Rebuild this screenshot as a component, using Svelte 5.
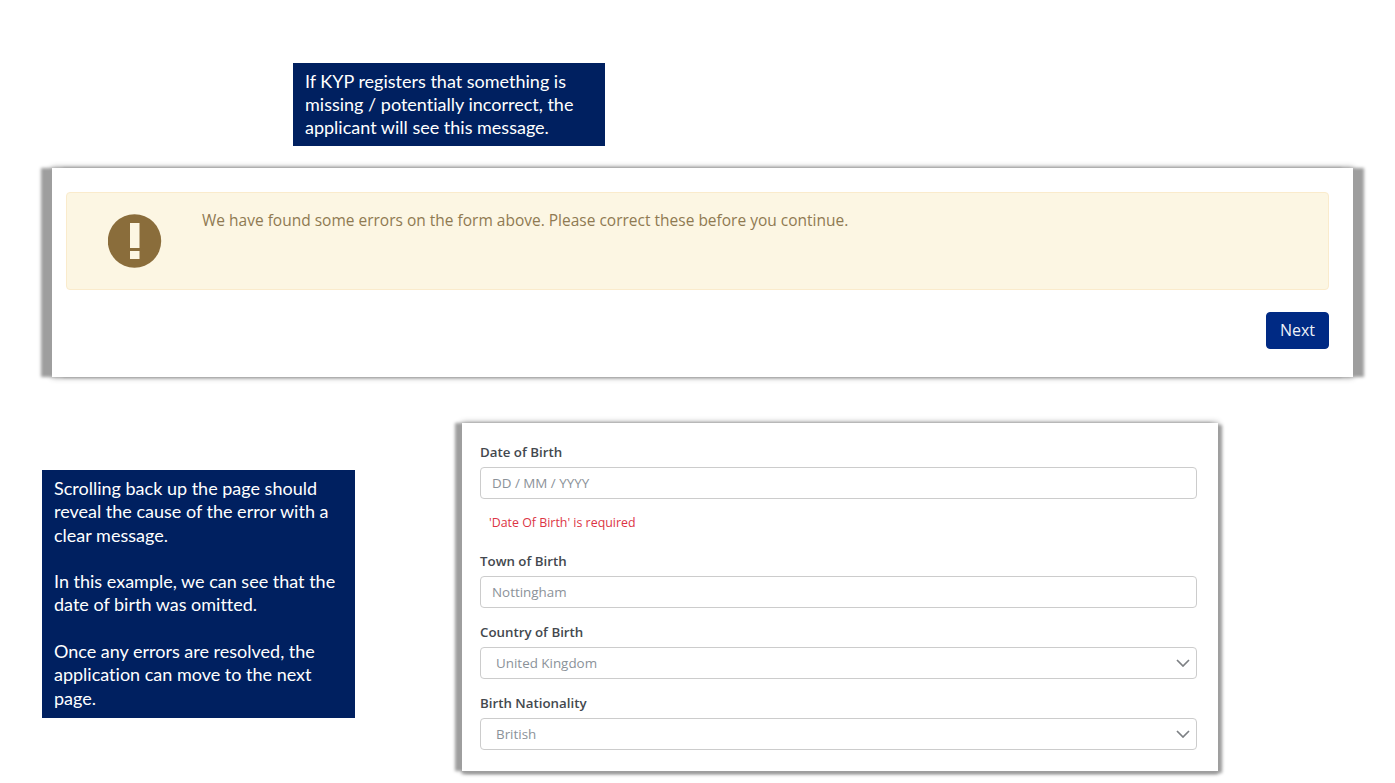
<script>
  const fields = [
    { label: 'Date of Birth', value: 'DD / MM / YYYY', error: "'Date Of Birth' is required" },
    { label: 'Town of Birth', value: 'Nottingham' },
    { label: 'Country of Birth', value: 'United Kingdom', select: true },
    { label: 'Birth Nationality', value: 'British', select: true }
  ]
</script>

<div class="page">
  <div class="note top-note">
    If KYP registers that something is missing / potentially incorrect, the applicant will see this message.
  </div>

  <section class="wide-card">
    <div class="alert">
      <svg class="alert-icon" viewBox="0 0 54 54" width="54" height="54" aria-hidden="true">
        <circle cx="26.5" cy="27" r="26.7" fill="#8a6d3b" />
        <rect x="22" y="9" width="9.5" height="25" fill="#fcf6e3" />
        <rect x="22" y="37" width="9.5" height="8" fill="#fcf6e3" />
      </svg>
      <p>We have found some errors on the form above. Please correct these before you continue.</p>
    </div>
    <div class="actions">
      <button>Next</button>
    </div>
  </section>

  <div class="lower">
    <div class="note side-note">
      <p>Scrolling back up the page should reveal the cause of the error with a clear message.</p>
      <p>In this example, we can see that the date of birth was omitted.</p>
      <p>Once any errors are resolved, the application can move to the next page.</p>
    </div>

    <section class="form-card">
      {#each fields as field}
        <div class="field">
          <div class="label">{field.label}</div>
          <div class="control" class:select={field.select}>
            <span>{field.value}</span>
            {#if field.select}
              <svg viewBox="0 0 14 8" width="14" height="8" aria-hidden="true">
                <path d="M1 1l6 6 6-6" fill="none" stroke="#7d8084" stroke-width="1.7" />
              </svg>
            {/if}
          </div>
          {#if field.error}
            <div class="error">{field.error}</div>
          {/if}
        </div>
      {/each}
    </section>
  </div>
</div>

<style>
  :global(body) {
    background: #fff;
  }

  .page {
    width: 1395px;
    height: 783px;
    overflow: hidden;
    padding-top: 63px;
    box-sizing: border-box;
    font-family: "Open Sans", sans-serif;
  }

  .note {
    background: #002060;
    color: #fff;
    font-family: Lato, sans-serif;
    font-size: 18px;
    line-height: 23.3px;
    font-variant-ligatures: none;
    box-sizing: border-box;
  }

  .note p {
    margin: 0 0 23.3px;
  }

  .note p:last-child {
    margin-bottom: 0;
  }

  .top-note {
    width: 312px;
    height: 83px;
    margin-left: 293px;
    padding: 7px 12px;
    line-height: 23px;
  }

  .wide-card {
    width: 1301px;
    height: 209px;
    margin: 22px 0 0 52px;
    padding: 24px 24px 0 14px;
    box-sizing: border-box;
    background: #fff;
    box-shadow: -11px 0 3px #9e9e9e, 11px 0 3px #9e9e9e, 0 0 6px #8c8c8c;
  }

  .alert {
    display: flex;
    height: 98px;
    box-sizing: border-box;
    padding: 21px 0 0 41px;
    background: #fcf6e3;
    border: 1px solid #faebcc;
    border-radius: 4px;
    color: #8f7a52;
  }

  .alert-icon {
    flex: none;
  }

  .alert p {
    margin: -6px 0 0 40px;
    font-size: 15.5px;
    line-height: 24px;
  }

  .actions {
    display: flex;
    justify-content: flex-end;
    margin-top: 22px;
  }

  button {
    width: 63px;
    height: 37px;
    padding: 0 0 2px;
    border: 1px solid #002a84;
    border-radius: 4px;
    background: #002a84;
    color: #eef1f8;
    font-family: "Open Sans", sans-serif;
    font-size: 16px;
  }

  .lower {
    display: flex;
    align-items: flex-start;
    margin-top: 46px;
  }

  .side-note {
    width: 313px;
    height: 248px;
    margin: 47px 107px 0 42px;
    padding: 7px 12px;
  }

  .form-card {
    width: 756px;
    height: 348px;
    padding: 20px 21px 0 18px;
    box-sizing: border-box;
    background: #fff;
    box-shadow: -7px 0 3px #9e9e9e, 4px 2px 3px #9e9e9e, 0 3px 3px #9e9e9e, 0 0 6px #8c8c8c;
  }

  .field {
    margin-bottom: 15px;
  }

  .label {
    height: 24px;
    color: #43484e;
    font-size: 13.3px;
    font-weight: 600;
    line-height: 18px;
  }

  .control {
    display: flex;
    align-items: center;
    justify-content: space-between;
    height: 32px;
    box-sizing: border-box;
    padding: 0 6px 0 11px;
    border: 1px solid #ccc;
    border-radius: 4px;
    color: #8b9299;
    font-size: 13.4px;
  }

  .select {
    padding-left: 15px;
  }

  .error {
    margin-top: 15px;
    margin-bottom: 20px;
    padding-left: 9px;
    color: #dc3545;
    font-size: 12.4px;
    line-height: 18px;
  }
</style>
